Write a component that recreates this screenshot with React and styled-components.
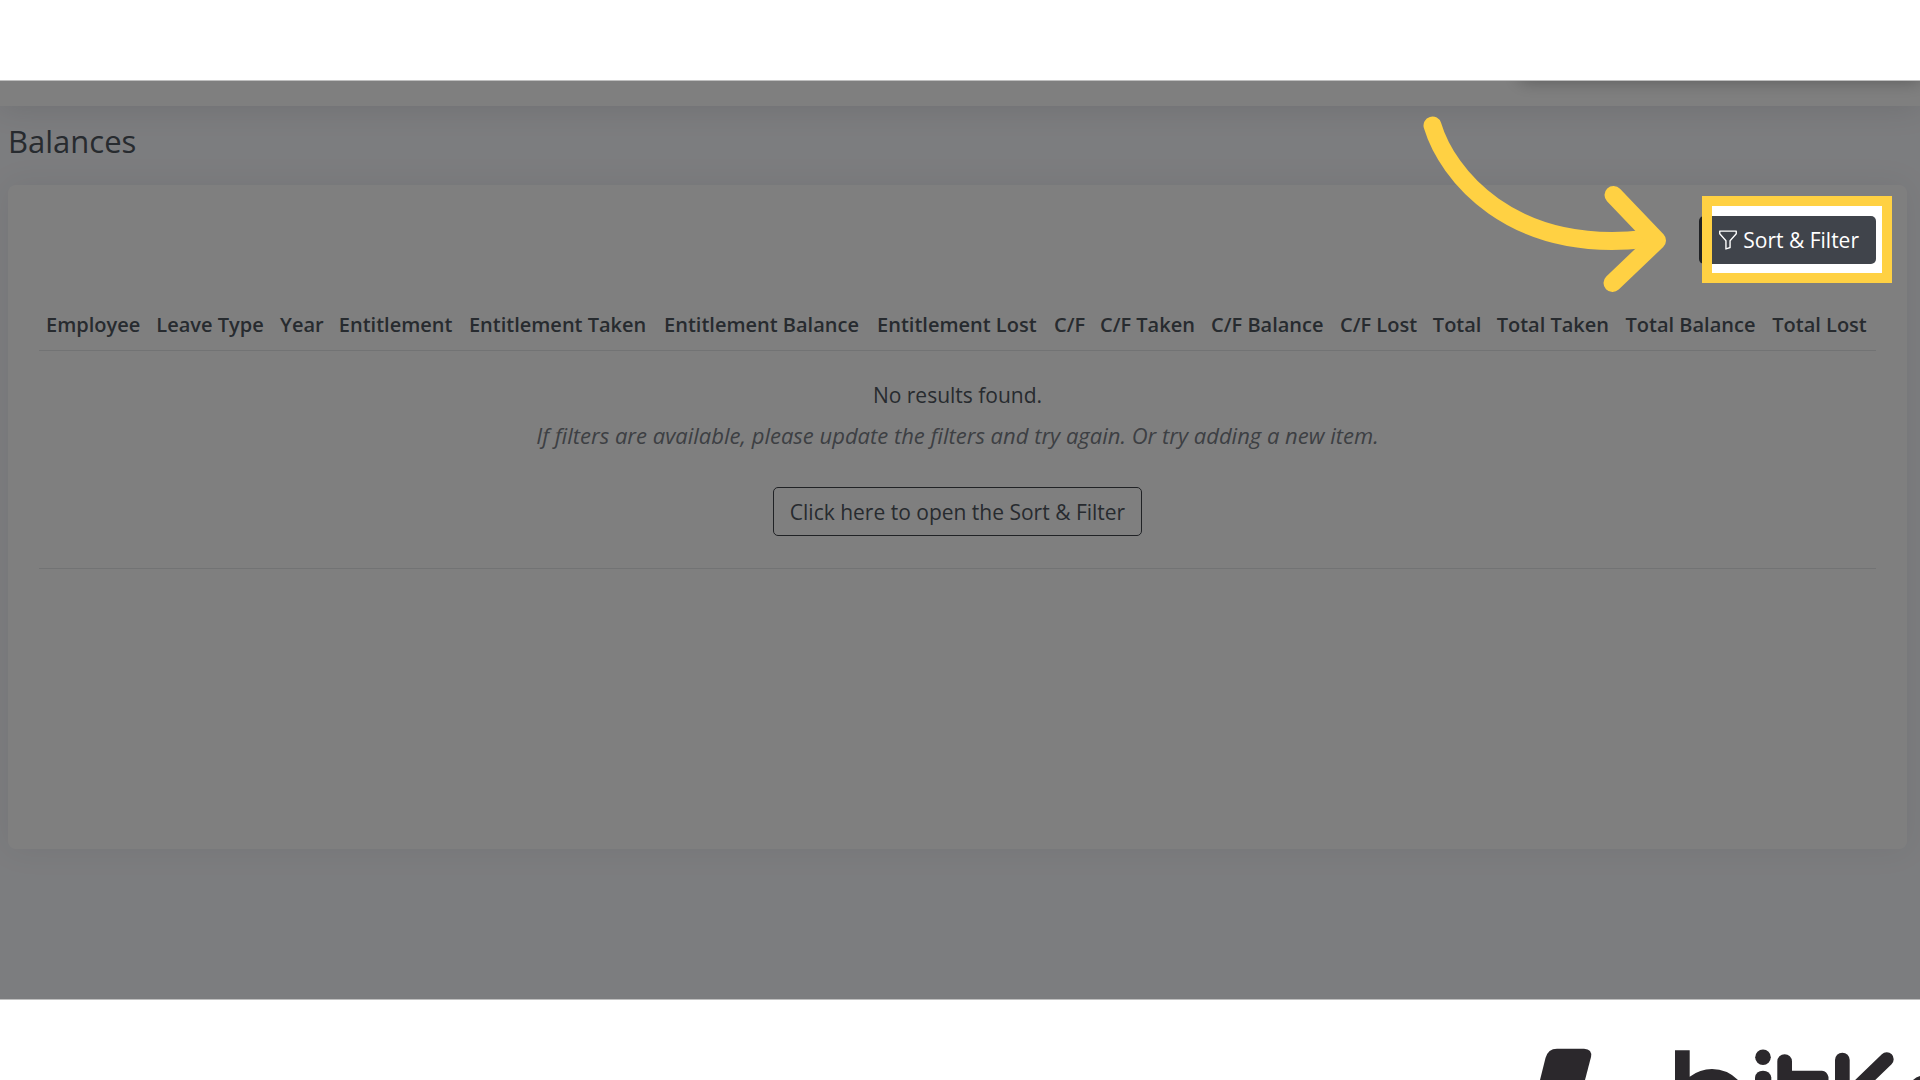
import styled, { createGlobalStyle } from "styled-components";

const columns = [
  "Employee",
  "Leave Type",
  "Year",
  "Entitlement",
  "Entitlement Taken",
  "Entitlement Balance",
  "Entitlement Lost",
  "C/F",
  "C/F Taken",
  "C/F Balance",
  "C/F Lost",
  "Total",
  "Total Taken",
  "Total Balance",
  "Total Lost",
];

const FunnelIcon = () => (
  <FunnelSvg viewBox="0 0 16 16" aria-hidden="true">
    <path d="M1.5 1.5A.5.5 0 0 1 2 1h12a.5.5 0 0 1 .5.5v2a.5.5 0 0 1-.128.334L10 8.692V13.5a.5.5 0 0 1-.342.474l-3 1A.5.5 0 0 1 6 14.5V8.692L1.628 3.834A.5.5 0 0 1 1.5 3.5zm1 .5v1.308l4.372 4.858A.5.5 0 0 1 7 8.5v5.306l2-.666V8.5a.5.5 0 0 1 .128-.334L13.5 3.308V2z" />
  </FunnelSvg>
);

const Arrow = () => (
  <ArrowSvg viewBox="0 0 244 178" aria-hidden="true">
    <path d="M10.5 9.5C25 58 88 138 223 123" />
    <path d="M191.5 79L235 124.5L190.5 167" />
  </ArrowSvg>
);

const Logo = () => (
  <LogoSvg viewBox="0 0 380 32" role="img" aria-label="Logo">
    <path d="M0 32L5.5 10Q8 .7 17 .7H44Q52.5 1 51 9L45 32Z" />
    <path d="M135 2.3H149.7V28.7Q160 21 172 21Q187 21 198 32H135Z" />
    <circle cx="223" cy="9.2" r="7.8" />
    <path d="M215 32V29.5Q216 22.7 223 22.7Q230 22.7 231.3 29.5V32Z" />
    <path d="M237.3 32V13.5A7.3 7.3 0 0 1 252 13.5V22.7H282Q287 23 288.5 29V32Z" />
    <path d="M295 32V12A7.3 7.3 0 0 1 309.7 12V32Z" />
    <path
      d="M346.7 11.2L320 37"
      stroke="#2b282c"
      strokeWidth="14"
      strokeLinecap="round"
    />
    <path d="M373 32Q376 29 380 28V32Z" />
  </LogoSvg>
);

const App = () => {
  return (
    <Page>
      <GlobalStyle />
      <Screen>
        <TopBar>
          <MenuShadow />
        </TopBar>
        <Main>
          <Title>Balances</Title>
          <Card>
            <Toolbar>
              <FilterSlot>
                <FilterButton type="button">
                  <FunnelIcon />
                  Sort &amp; Filter
                </FilterButton>
                <Spotlight />
                <Arrow />
              </FilterSlot>
            </Toolbar>
            <Table>
              <thead>
                <tr>
                  {columns.map((name) => (
                    <th key={name} scope="col">
                      {name}
                    </th>
                  ))}
                </tr>
              </thead>
              <tbody>
                <tr>
                  <td colSpan={columns.length}>
                    <Empty>
                      <p>No results found.</p>
                      <Hint>
                        If filters are available, please update the filters and
                        try again. Or try adding a new item.
                      </Hint>
                      <OutlineButton type="button">
                        Click here to open the Sort &amp; Filter
                      </OutlineButton>
                    </Empty>
                  </td>
                </tr>
              </tbody>
            </Table>
          </Card>
        </Main>
      </Screen>
      <Footer>
        <Logo />
      </Footer>
    </Page>
  );
};

export default App;

const GlobalStyle = createGlobalStyle`
  * {
    box-sizing: border-box;
  }
  body {
    margin: 0;
    background: #fff;
    color: #4f565e;
    font-family: "Open Sans", "Noto Sans", sans-serif;
    font-size: 21px;
    line-height: 30px;
  }
  p, h1 {
    margin: 0;
  }
  button {
    font: inherit;
  }
`;

const Page = styled.div`
  min-height: 100vh;
  padding-top: 80px;
  overflow: hidden;
`;

const Screen = styled.div`
  position: relative;
  overflow: hidden;
  background: #f9fafe;
  border-top: 1px solid #bfbfbf;
  border-bottom: 1px solid #bfbfbf;
`;

const TopBar = styled.header`
  height: 25px;
  position: relative;
  background: #fff;
  box-shadow: 0 0 32px rgba(50, 55, 65, 0.16);
`;

const MenuShadow = styled.div`
  position: absolute;
  top: -22px;
  right: 0;
  width: 400px;
  height: 20px;
  box-shadow: 0 2px 18px rgba(0, 0, 0, 0.3);
`;

const Main = styled.main`
  padding: 15px 13px 150px 8px;
`;

const Title = styled.h1`
  font-size: 31px;
  font-weight: 400;
  line-height: 40px;
  margin-bottom: 24px;
`;

const Card = styled.section`
  min-height: 664px;
  padding: 31px;
  background: #fff;
  border-radius: 8px;
  box-shadow: 0 0 32px rgba(50, 55, 65, 0.08);
`;

const Toolbar = styled.div`
  display: flex;
  justify-content: flex-end;
  margin-bottom: 36px;
`;

const FilterSlot = styled.div`
  position: relative;
`;

const FilterButton = styled.button`
  display: flex;
  align-items: center;
  gap: 4px;
  height: 48px;
  padding: 0 17px 0 18px;
  border: 0;
  border-radius: 5px;
  background: #40444b;
  color: #fff;
`;

const FunnelSvg = styled.svg`
  width: 22px;
  height: 22px;
  fill: currentColor;
`;

/* dims everything on the screen except the framed button */
const Spotlight = styled.div`
  position: absolute;
  z-index: 1;
  inset: -20px -16px -19px 3px;
  border: 10px solid #ffd143;
  box-shadow: 0 0 0 3000px rgba(0, 0, 0, 0.5);
  pointer-events: none;
`;

const ArrowSvg = styled.svg`
  position: absolute;
  z-index: 2;
  top: -100px;
  right: 210px;
  width: 244px;
  height: 178px;
  fill: none;
  stroke: #ffd143;
  stroke-width: 18;
  stroke-linecap: round;
  stroke-linejoin: round;
  pointer-events: none;
`;

const Table = styled.table`
  width: 100%;
  border-collapse: collapse;

  th {
    padding: 10px 7px;
    font-size: 20px;
    font-weight: 600;
    text-align: left;
    white-space: nowrap;
  }
  tr {
    border-bottom: 1px solid #e4e6e9;
  }
  td {
    padding: 0;
  }
`;

const Empty = styled.div`
  display: flex;
  flex-direction: column;
  align-items: center;
  padding: 29px 0 32px;
`;

const Hint = styled.p`
  margin-top: 10px;
  color: #7a8087;
  font-size: 22px;
  font-style: italic;
`;

const OutlineButton = styled.button`
  height: 49px;
  margin-top: 37px;
  padding: 0 16px;
  border: 1px solid #40444b;
  border-radius: 5px;
  background: transparent;
  color: inherit;
`;

const Footer = styled.footer`
  display: flex;
  justify-content: flex-end;
  height: 80px;
  padding-top: 48px;
`;

const LogoSvg = styled.svg`
  width: 380px;
  height: 32px;
  fill: #2b282c;
`;
